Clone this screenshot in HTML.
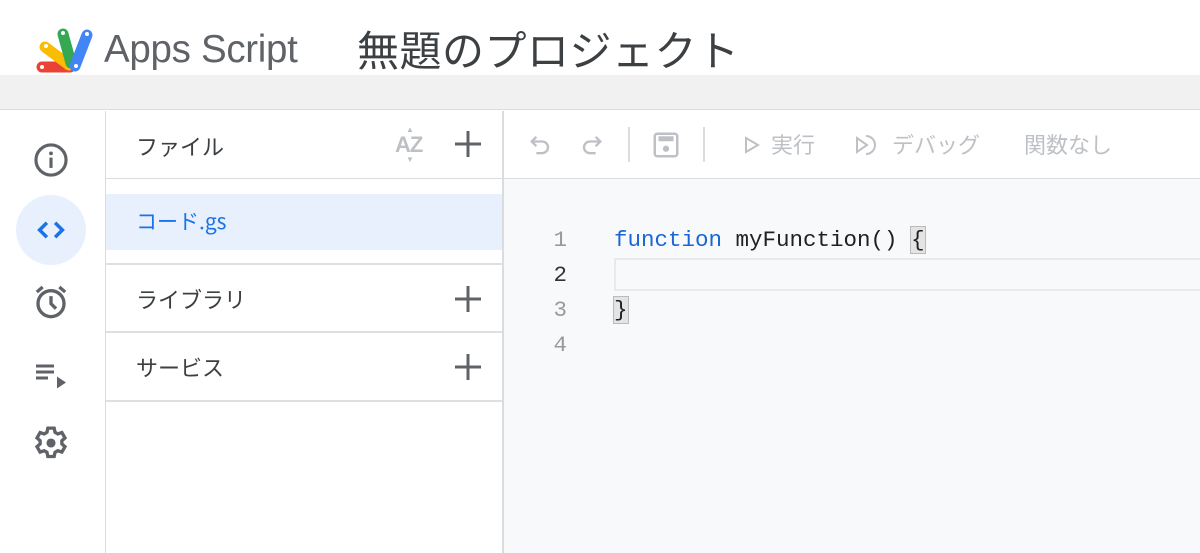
<!DOCTYPE html>
<html><head><meta charset="utf-8"><style>
*{margin:0;padding:0;box-sizing:border-box}
body{width:1200px;height:553px;overflow:hidden;background:#fff;font-family:"Liberation Sans","Noto Sans CJK JP",sans-serif;position:relative}
.a{position:absolute}
.jp{font-family:"Noto Sans CJK JP","Liberation Sans",sans-serif}
</style></head><body>
<div class="a" style="left:0;top:75px;width:1200px;height:35px;background:#f1f1f1;border-bottom:1px solid #dadce0"></div>
<svg class="a" style="left:36px;top:27px" width="60" height="48" viewBox="0 0 60 48">
<g stroke-linecap="round">
<line x1="6" y1="40" x2="34" y2="40" stroke="#ea4335" stroke-width="11"/>
<line x1="9" y1="20" x2="33" y2="38" stroke="#fbbc04" stroke-width="11"/>
<line x1="27" y1="7" x2="35" y2="36" stroke="#34a853" stroke-width="11"/>
<line x1="51" y1="8" x2="39" y2="39" stroke="#4285f4" stroke-width="11"/>
</g>
<g fill="#fff"><circle cx="6" cy="40" r="2"/><circle cx="10" cy="19" r="2"/><circle cx="27" cy="6" r="2"/><circle cx="51" cy="7" r="2"/><circle cx="40" cy="39" r="2"/></g>
</svg>
<div class="a" style="left:104px;top:28px;font-size:38.5px;color:#5f6368;letter-spacing:-0.3px">Apps Script</div>
<div class="a jp" style="left:357px;top:21px;font-size:42px;color:#3c4043;letter-spacing:0.5px;line-height:56px">無題のプロジェクト</div>

<div class="a" style="left:105px;top:111px;width:1px;height:442px;background:#dadce0"></div>
<div class="a" style="left:502px;top:111px;width:2px;height:442px;background:#dadce0"></div>
<div class="a" style="left:504px;top:178px;width:696px;height:375px;background:#f8f9fa;border-top:1px solid #dadce0"></div>
<div class="a" style="left:106px;top:178px;width:396px;height:1px;background:#dadce0"></div>

<svg class="a" style="left:32px;top:141px" width="38" height="38" viewBox="0 0 24 24"><circle cx="12" cy="12" r="9.5" fill="none" stroke="#5f6368" stroke-width="2"/><rect x="11" y="10.5" width="2" height="6.5" fill="#5f6368"/><circle cx="12" cy="7.8" r="1.2" fill="#5f6368"/></svg>
<div class="a" style="left:16px;top:195px;width:70px;height:70px;border-radius:50%;background:#e8f0fe"></div>
<svg class="a" style="left:31px;top:211px" width="40" height="38" viewBox="0 0 24 24"><path d="M9.4 16.6 4.8 12l4.6-4.6M14.6 16.6 19.2 12l-4.6-4.6" fill="none" stroke="#1a73e8" stroke-width="2.2"/></svg>
<svg class="a" style="left:31px;top:282px" width="40" height="40" viewBox="0 0 24 24"><circle cx="12" cy="13" r="7.8" fill="none" stroke="#5f6368" stroke-width="2"/><path d="M12 8.5V13l3 3M3.5 6 7 3M20.5 6 17 3" fill="none" stroke="#5f6368" stroke-width="2"/></svg>
<svg class="a" style="left:33px;top:357px" width="36" height="36" viewBox="0 0 24 24"><path d="M2 6h12M2 10h12M2 14h8" stroke="#5f6368" stroke-width="2"/><path d="M16 13v8l6-4z" fill="#5f6368"/></svg>
<svg class="a" style="left:30px;top:422px" width="42" height="42" viewBox="0 0 24 24"><path fill="none" stroke="#5f6368" stroke-width="1.9" d="M10.2 3.5h3.6l.5 2.4 1.6.9 2.3-.8 1.8 3.1-1.8 1.6v1.8l1.8 1.6-1.8 3.1-2.3-.8-1.6.9-.5 2.4h-3.6l-.5-2.4-1.6-.9-2.3.8-1.8-3.1 1.8-1.6v-1.8L4 9.1l1.8-3.1 2.3.8 1.6-.9z"/><circle cx="12" cy="12" r="2.6" fill="#5f6368"/></svg>

<div class="a jp" style="left:136px;top:130px;font-size:22px;color:#3c4043">ファイル</div>
<div class="a" style="left:395px;top:132px;font-size:22px;color:#bdc1c6;font-weight:bold;letter-spacing:-1px">AZ</div>
<div class="a" style="left:406px;top:125px;font-size:8px;color:#bdc1c6">▲</div>
<div class="a" style="left:406px;top:155px;font-size:8px;color:#bdc1c6">▼</div>
<svg class="a" style="left:454px;top:130px" width="28" height="28"><path d="M14 1v26M1 14h26" stroke="#5f6368" stroke-width="3"/></svg>
<div class="a" style="left:106px;top:194px;width:396px;height:56px;background:#e8f0fe"></div>
<div class="a jp" style="left:136px;top:206px;font-size:21px;color:#1a73e8">コード.gs</div>
<div class="a" style="left:106px;top:263px;width:396px;height:2px;background:#e0e0e0"></div>
<div class="a jp" style="left:136px;top:283px;font-size:22px;color:#3c4043">ライブラリ</div>
<svg class="a" style="left:454px;top:285px" width="28" height="28"><path d="M14 1v26M1 14h26" stroke="#5f6368" stroke-width="3"/></svg>
<div class="a" style="left:106px;top:331px;width:396px;height:2px;background:#e0e0e0"></div>
<div class="a jp" style="left:136px;top:351px;font-size:22px;color:#3c4043">サービス</div>
<svg class="a" style="left:454px;top:353px" width="28" height="28"><path d="M14 1v26M1 14h26" stroke="#5f6368" stroke-width="3"/></svg>
<div class="a" style="left:106px;top:400px;width:396px;height:2px;background:#e0e0e0"></div>

<svg class="a" style="left:526px;top:131px" width="30" height="28" viewBox="0 0 24 24"><path d="M4 9h9a5 5 0 0 1 0 10H8M8 5 4 9l4 4" fill="none" stroke="#bdc1c6" stroke-width="2"/></svg>
<svg class="a" style="left:576px;top:131px" width="30" height="28" viewBox="0 0 24 24"><path d="M20 9h-9a5 5 0 0 0 0 10h5M16 5l4 4-4 4" fill="none" stroke="#bdc1c6" stroke-width="2"/></svg>
<div class="a" style="left:628px;top:127px;width:2px;height:35px;background:#dadce0"></div>
<svg class="a" style="left:651px;top:130px" width="30" height="30" viewBox="0 0 24 24"><rect x="3" y="3" width="18" height="18" rx="2" fill="none" stroke="#bdc1c6" stroke-width="2"/><rect x="6" y="5" width="12" height="4" fill="#bdc1c6"/><circle cx="12" cy="15" r="2.5" fill="#bdc1c6"/></svg>
<div class="a" style="left:703px;top:127px;width:2px;height:35px;background:#dadce0"></div>
<svg class="a" style="left:742px;top:135px" width="20" height="20" viewBox="0 0 20 20"><path d="M4 3l12 7-12 7z" fill="none" stroke="#bdc1c6" stroke-width="2"/></svg>
<div class="a jp" style="left:771px;top:128px;font-size:22px;color:#bdc1c6">実行</div>
<svg class="a" style="left:854px;top:132px" width="28" height="26" viewBox="0 0 28 26"><path d="M3 6l10 7-10 7z" fill="none" stroke="#bdc1c6" stroke-width="2"/><path d="M12 4a9 9 0 1 1 0 18" fill="none" stroke="#bdc1c6" stroke-width="2"/></svg>
<div class="a jp" style="left:892px;top:128px;font-size:22px;color:#bdc1c6">デバッグ</div>
<div class="a jp" style="left:1024px;top:128px;font-size:22px;color:#bdc1c6">関数なし</div>

<div class="a" style="left:614px;top:258px;width:586px;height:33px;border:2px solid #e9e9e9;border-right:none"></div>
<div style="position:absolute;left:540px;top:223px;font-family:'Liberation Mono',monospace;font-size:22.5px;line-height:35px;color:#999;text-align:right;width:27px">1<br><span style="color:#333">2</span><br>3<br>4</div>
<div style="position:absolute;left:614px;top:223px;font-family:'Liberation Mono',monospace;font-size:22.5px;line-height:35px;color:#202124;white-space:pre"><span style="color:#1967d2">function</span> myFunction() <span style="background:#e4e4e4;outline:1px solid #bbb">{</span>

<span style="background:#e4e4e4;outline:1px solid #bbb">}</span></div>
</body></html>
